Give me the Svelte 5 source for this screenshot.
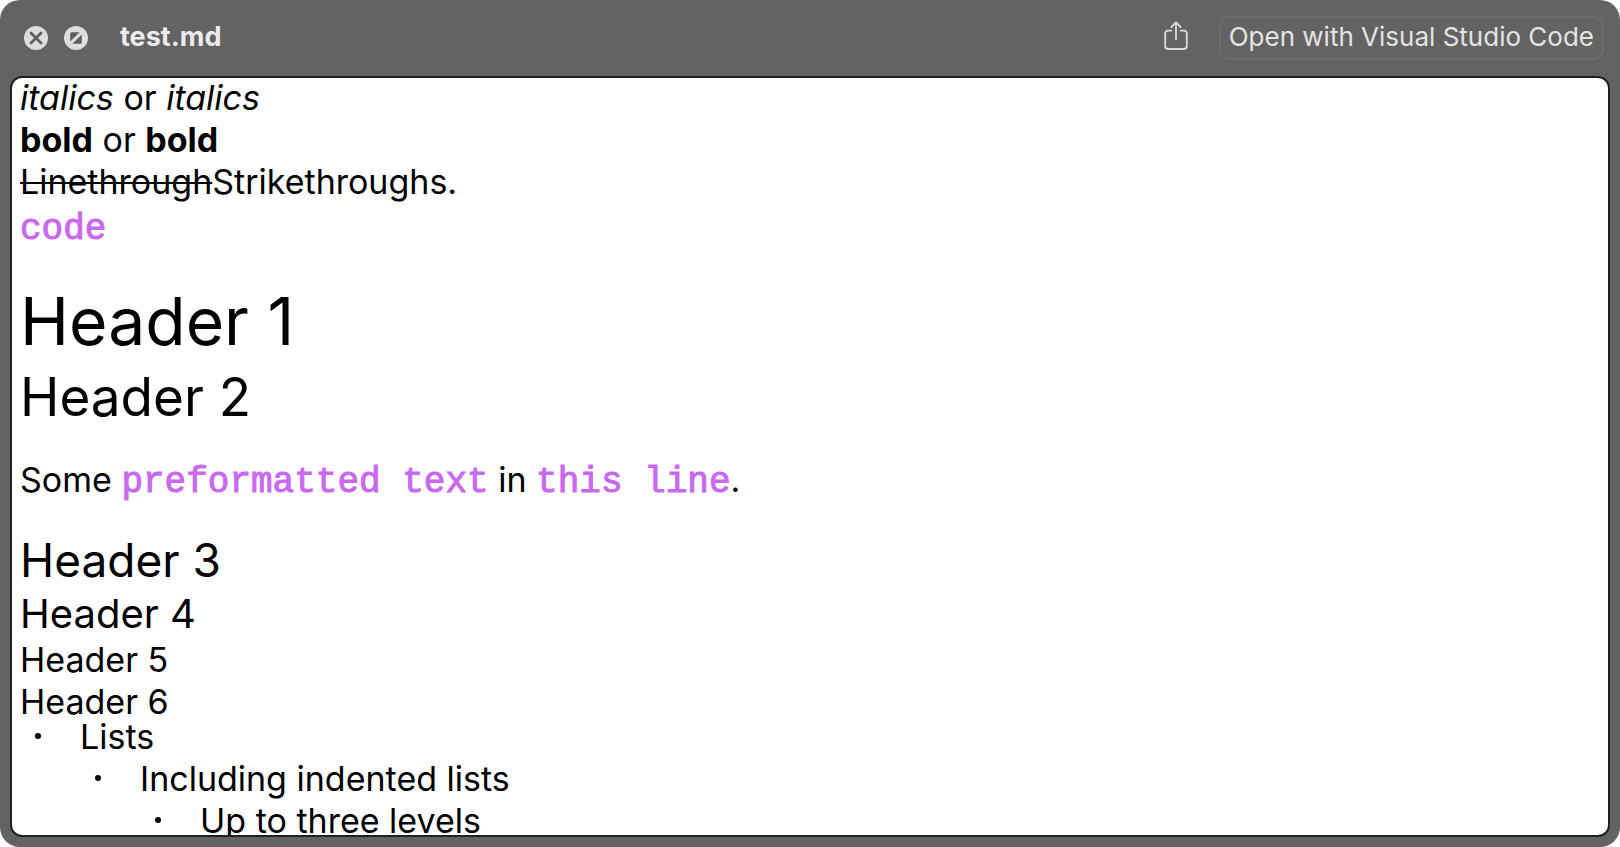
<script>
  const fileName = 'test.md';
  const appName = 'Visual Studio Code';
</script>

<div class="window">
  <header>
    <button class="round" aria-label="Close">
      <svg width="24" height="24" viewBox="0 0 24 24">
        <circle cx="12" cy="12" r="12" fill="#dedede" />
        <path d="M7 7l10 10M17 7L7 17" stroke="#5f5f5f" stroke-width="2.8" stroke-linecap="round" />
      </svg>
    </button>
    <button class="round" aria-label="Full screen">
      <svg width="24" height="24" viewBox="0 0 24 24">
        <circle cx="12" cy="12" r="12" fill="#dedede" />
        <path d="M6.2 15.6V7.8Q6.2 6.2 7.8 6.2H15.6ZM17.8 8.4V16.2Q17.8 17.8 16.2 17.8H8.4Z" fill="#5f5f5f" />
      </svg>
    </button>
    <h1 class="title">{fileName}</h1>
    <button class="share" aria-label="Share">
      <svg width="24" height="30" viewBox="0 0 24 30" fill="none" stroke="#dcdcdc" stroke-width="1.8" stroke-linecap="round" stroke-linejoin="round">
        <path d="M7.4 9.6H4.2Q1.2 9.6 1.2 12.6V25Q1.2 28 4.2 28H19.8Q22.8 28 22.8 25V12.6Q22.8 9.6 19.8 9.6H16.6" />
        <path d="M12 18.6V1.6M7.4 6L12 1.4L16.6 6" />
      </svg>
    </button>
    <button class="open">Open with {appName}</button>
  </header>

  <main>
    <article>
      <p><em>italics</em> or <em>italics</em></p>
      <p><strong>bold</strong> or <strong>bold</strong></p>
      <p><s>Linethrough</s>Strikethroughs.</p>
      <p class="code-line"><code>code</code></p>
      <h1>Header 1</h1>
      <h2>Header 2</h2>
      <p class="spaced">Some <code>preformatted text</code> in <code>this line</code>.</p>
      <h3>Header 3</h3>
      <h4>Header 4</h4>
      <h5>Header 5</h5>
      <h6>Header 6</h6>
      <ul class="top">
        <li>
          <span>Lists</span>
          <ul>
            <li>
              <span>Including indented lists</span>
              <ul>
                <li><span>Up to three levels</span></li>
              </ul>
            </li>
          </ul>
        </li>
      </ul>
    </article>
  </main>
</div>

<style>
  :global(body) {
    margin: 0;
    background: #fff;
  }
  .window {
    box-sizing: border-box;
    display: flex;
    flex-direction: column;
    height: 100vh;
    padding: 0 10px 10px;
    border-radius: 20px;
    background: #636363;
    font-family: Inter, 'Liberation Sans', sans-serif;
    overflow: hidden;
  }
  header {
    display: flex;
    align-items: center;
    flex: none;
    height: 76px;
    padding: 0 6px 0 14px;
    box-sizing: border-box;
  }
  button {
    margin: 0;
    padding: 0;
    border: 0;
    background: none;
    color: #e4e4e4;
    font: inherit;
  }
  svg {
    display: block;
  }
  .round {
    margin-right: 16px;
  }
  .title {
    flex: 1;
    margin: 0 0 0 16px;
    padding-bottom: 2px;
    color: #ececec;
    font-size: 27px;
    font-weight: 700;
    line-height: 32px;
  }
  .share {
    margin-right: 31px;
    padding-bottom: 4px;
  }
  .open {
    height: 44px;
    padding: 0 8px 2px;
    border: 2px solid #6c6c6c;
    border-radius: 10px;
    font-size: 26px;
    line-height: 32px;
    white-space: nowrap;
  }
  main {
    flex: 1;
    min-height: 0;
    border: 2px solid #202020;
    border-radius: 12px;
    background: #fff;
    overflow: hidden;
  }
  article {
    margin-top: -1px;
    padding: 0 8px;
    color: #000;
    font-size: 34px;
    line-height: 42px;
  }
  article :is(p, h1, h2, h3, h4, h5, h6, ul) {
    margin: 0;
    font-weight: 400;
  }
  article h1 {
    margin-top: 28px;
    font-size: 66px;
    line-height: 84px;
  }
  article h2 {
    font-size: 53px;
    line-height: 68px;
  }
  article .spaced {
    margin: 28px 0 30px;
  }
  article h3 {
    font-size: 46px;
    line-height: 58px;
  }
  article h4 {
    font-size: 40px;
    line-height: 50px;
  }
  article :is(h5, h6) {
    font-size: 34px;
    line-height: 42px;
  }
  article .code-line {
    line-height: 48px;
  }
  strong {
    font-weight: 700;
  }
  s {
    text-decoration-thickness: 2px;
  }
  code {
    color: #c869f0;
    font-family: 'Liberation Mono', monospace;
    font-size: 36px;
    line-height: 1;
    -webkit-text-stroke: 1px #c869f0;
  }
  ul {
    padding: 0;
    list-style: none;
  }
  article .top {
    margin-top: -7px;
  }
  li {
    padding-left: 60px;
  }
  li > span::before {
    content: '';
    display: inline-block;
    width: 6px;
    height: 6px;
    margin: 0 39px 10px -45px;
    border-radius: 50%;
    background: #000;
  }
</style>
